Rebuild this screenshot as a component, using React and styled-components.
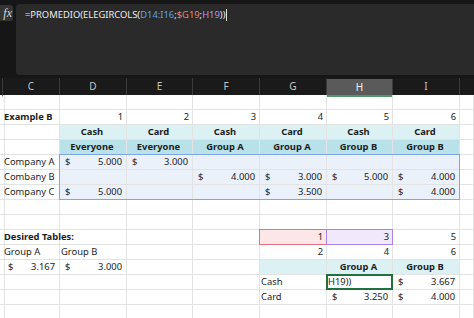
import React from 'react';
import styled, { createGlobalStyle } from 'styled-components';

const COLS = '3px 57px 67px 66px 67px 67px 66px 67px 14px';
const LETTERS = ['', 'C', 'D', 'E', 'F', 'G', 'H', 'I', ''];
const ROWS = 15;

// content of the sheet, keyed by column letter + row
const CELLS = {
  C2: { v: 'Example B', k: 'bold' },
  D2: { v: '1', k: 'num' }, E2: { v: '2', k: 'num' }, F2: { v: '3', k: 'num' },
  G2: { v: '4', k: 'num' }, H2: { v: '5', k: 'num' }, I2: { v: '6', k: 'num' },
  D3: { v: 'Cash', k: 'head' }, E3: { v: 'Card', k: 'head' }, F3: { v: 'Cash', k: 'head' },
  G3: { v: 'Card', k: 'head' }, H3: { v: 'Cash', k: 'head' }, I3: { v: 'Card', k: 'head' },
  D4: { v: 'Everyone', k: 'head' }, E4: { v: 'Everyone', k: 'head' }, F4: { v: 'Group A', k: 'head' },
  G4: { v: 'Group A', k: 'head' }, H4: { v: 'Group B', k: 'head' }, I4: { v: 'Group B', k: 'head' },
  C5: { v: 'Company A' }, D5: { v: '5.000', k: 'acc' }, E5: { v: '3.000', k: 'acc' },
  C6: { v: 'Combany B' }, F6: { v: '4.000', k: 'acc' }, G6: { v: '3.000', k: 'acc' },
  H6: { v: '5.000', k: 'acc' }, I6: { v: '4.000', k: 'acc' },
  C7: { v: 'Company C' }, D7: { v: '5.000', k: 'acc' }, G7: { v: '3.500', k: 'acc' }, I7: { v: '4.000', k: 'acc' },
  C10: { v: 'Desired Tables:', k: 'bold' },
  G10: { v: '1', k: 'num' }, H10: { v: '3', k: 'num' }, I10: { v: '5', k: 'num' },
  C11: { v: 'Group A' }, D11: { v: 'Group B' },
  G11: { v: '2', k: 'num' }, H11: { v: '4', k: 'num' }, I11: { v: '6', k: 'num' },
  C12: { v: '3.167', k: 'acc' }, D12: { v: '3.000', k: 'acc' },
  H12: { v: 'Group A', k: 'head' }, I12: { v: 'Group B', k: 'head' },
  G13: { v: 'Cash' }, H13: { v: 'H19))' }, I13: { v: '3.667', k: 'acc' },
  G14: { v: 'Card' }, H14: { v: '3.250', k: 'acc' }, I14: { v: '4.000', k: 'acc' },
};

const fillFor = (col, row) => {
  if (!col) return 'transparent';
  const inDI = 'DEFGHI'.includes(col);
  if (row === 3 && inDI) return '#dcf1f4';
  if (row === 4 && inDI) return '#b8e1e9';
  if (row >= 5 && row <= 7 && inDI) return '#ebf1fb';
  if (row === 12 && 'GHI'.includes(col)) return '#dcf1f4';
  if (row === 10 && col === 'G') return '#fde6e8';
  if (row === 10 && col === 'H') return '#f1e8fc';
  return 'transparent';
};

const GlobalStyle = createGlobalStyle`
  html, body { margin: 0; padding: 0; background: #ffffff; }
  body {
    font-family: "Noto Sans", "Open Sans", sans-serif;
    overflow: hidden;
  }
`;

const Window = styled.div`
  width: 474px;
  height: 318px;
  display: flex;
  flex-direction: column;
  overflow: hidden;
  background: #ffffff;
`;

const TopBar = styled.div`
  background: #161616;
  display: flex;
  flex-direction: column;
  gap: 3px;
  padding-top: 4px;
`;

const FormulaRow = styled.div`
  display: flex;
  gap: 3px;
  height: 71px;
`;

const FxButton = styled.div`
  width: 13px;
  height: 16px;
  margin-top: 1px;
  background: #343434;
  border-radius: 0 3px 3px 0;
  color: #d8d8d8;
  font-family: "Liberation Serif", serif;
  font-style: italic;
  font-size: 12px;
  line-height: 16px;
  text-align: right;
  padding-right: 1px;
  box-sizing: border-box;
  overflow: hidden;
  white-space: nowrap;
`;

const FormulaBox = styled.div`
  flex: 1;
  background: #2a2a2a;
  border-radius: 4px 0 0 4px;
  padding: 3px 9px;
  font-size: 9.4px;
  line-height: 15px;
  color: #ececec;
  white-space: nowrap;
`;

const Ref = styled.span`
  color: ${p => p.$color};
`;

const Caret = styled.span`
  display: inline-block;
  width: 1px;
  height: 12px;
  margin-left: 1px;
  vertical-align: -3px;
  background: #e0e0e0;
`;

const HeaderRow = styled.div`
  display: grid;
  grid-template-columns: ${COLS};
  height: 17px;
  background: #1a1a1a;
`;

const ColHead = styled.div`
  box-sizing: border-box;
  border-right: 1px solid ${p => (p.$last ? 'transparent' : '#3a3a3a')};
  background: ${p => (p.$selected ? '#5a5a5a' : 'transparent')};
  border-bottom: 2px solid ${p => (p.$selected ? '#4f9a68' : 'transparent')};
  margin-top: ${p => (p.$selected ? '1px' : '0')};
  color: ${p => (p.$selected ? '#f0f0f0' : '#c4c4c4')};
  font-size: 10px;
  line-height: 16px;
  text-align: center;
`;

const Sheet = styled.div`
  display: grid;
  grid-template-columns: ${COLS};
  grid-template-rows: repeat(${ROWS}, 15px);
  font-size: 9.4px;
  color: #1e1e1e;
`;

const Cell = styled.div`
  grid-row: ${p => p.$row};
  grid-column: ${p => p.$col};
  box-sizing: border-box;
  border-right: 1px solid #e3e3e3;
  border-bottom: 1px solid #e3e3e3;
  background: ${p => p.$fill};
  display: flex;
  align-items: center;
  justify-content: ${p => (p.$kind === 'head' ? 'center' : p.$kind === 'num' ? 'flex-end' : 'flex-start')};
  padding: 0 ${p => (p.$kind === 'acc' ? '4px' : '3px')} 0 ${p => (p.$kind === 'acc' ? '5px' : '1px')};
  font-weight: ${p => (p.$kind === 'head' || p.$kind === 'bold' ? 700 : 400)};
  white-space: nowrap;
  line-height: 14px;
  z-index: ${p => (p.$kind ? 1 : 0)};
`;

const Dollar = styled.span`
  flex: 1;
`;

const Range = styled.div`
  grid-row: ${p => p.$rows};
  grid-column: ${p => p.$cols};
  border: ${p => p.$width || 1}px solid ${p => p.$color};
  margin: -1px 0 0 -1px;
  z-index: 2;
  pointer-events: none;
`;

function SheetCell({ col, row }) {
  const letter = LETTERS[col - 1];
  const data = letter ? CELLS[letter + row] : undefined;
  return (
    <Cell $row={row} $col={col} $fill={fillFor(letter, row)} $kind={data?.k}>
      {data?.k === 'acc' ? (
        <>
          <Dollar>$</Dollar>
          <span>{data.v}</span>
        </>
      ) : (
        data?.v
      )}
    </Cell>
  );
}

export default function App() {
  const cells = [];
  for (let r = 1; r <= ROWS; r++) {
    for (let c = 1; c <= LETTERS.length; c++) {
      cells.push(<SheetCell key={`${r}-${c}`} col={c} row={r} />);
    }
  }

  return (
    <>
      <GlobalStyle />
      <Window>
        <TopBar>
          <FormulaRow>
            <FxButton>fx</FxButton>
            <FormulaBox>
              =PROMEDIO(ELEGIRCOLS(<Ref $color="#5aa2e6">D14:I16</Ref>;<Ref $color="#e8866f">$G19</Ref>;
              <Ref $color="#b295ea">H19</Ref>))
              <Caret />
            </FormulaBox>
          </FormulaRow>
          <HeaderRow>
            {LETTERS.map((l, i) => (
              <ColHead key={i} $selected={l === 'H'} $last={i === LETTERS.length - 1}>
                {l}
              </ColHead>
            ))}
          </HeaderRow>
        </TopBar>
        <Sheet>
          {cells}
          <Range $rows="5 / 8" $cols="3 / 9" $color="#7ea6e3" />
          <Range $rows="10" $cols="6" $color="#e5717f" />
          <Range $rows="10" $cols="7" $color="#a884e3" />
          <Range $rows="13" $cols="7" $color="#22703f" $width={2} />
        </Sheet>
      </Window>
    </>
  );
}
